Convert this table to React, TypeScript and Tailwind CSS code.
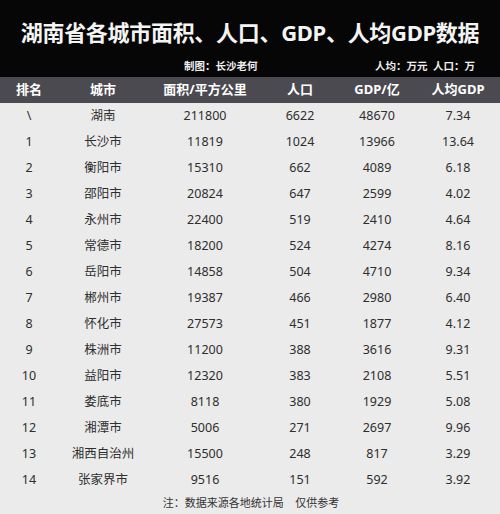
import React from "react";

const rows: [string, string, string, string, string, string][] = [
  ["\\", "湖南", "211800", "6622", "48670", "7.34"],
  ["1", "长沙市", "11819", "1024", "13966", "13.64"],
  ["2", "衡阳市", "15310", "662", "4089", "6.18"],
  ["3", "邵阳市", "20824", "647", "2599", "4.02"],
  ["4", "永州市", "22400", "519", "2410", "4.64"],
  ["5", "常德市", "18200", "524", "4274", "8.16"],
  ["6", "岳阳市", "14858", "504", "4710", "9.34"],
  ["7", "郴州市", "19387", "466", "2980", "6.40"],
  ["8", "怀化市", "27573", "451", "1877", "4.12"],
  ["9", "株洲市", "11200", "388", "3616", "9.31"],
  ["10", "益阳市", "12320", "383", "2108", "5.51"],
  ["11", "娄底市", "8118", "380", "1929", "5.08"],
  ["12", "湘潭市", "5006", "271", "2697", "9.96"],
  ["13", "湘西自治州", "15500", "248", "817", "3.29"],
  ["14", "张家界市", "9516", "151", "592", "3.92"],
];

const headers = ["排名", "城市", "面积/平方公里", "人口", "GDP/亿", "人均GDP"];
const grid = "grid grid-cols-[58px_90px_114px_76px_78px_84px]";
const font = { fontFamily: '"Noto Sans", "Noto Sans CJK SC", sans-serif' };

export default function App() {
  return (
    <div className="w-[500px] h-[514px] bg-[#ebebeb] overflow-hidden" style={font}>
      <div className="h-[77px] bg-[#060606] flex flex-col">
        <div className="h-[56px] flex items-center justify-center pt-[8px]">
          <span className="text-[#f4f4f4] text-[22px] font-bold tracking-[-0.3px]">
            湖南省各城市面积、人口、GDP、人均GDP数据
          </span>
        </div>
        <div className="flex-1 relative text-[10.5px] font-bold text-[#eeeeee]">
          <span className="absolute left-[184px] top-[3px]">制图：长沙老何</span>
          <span className="absolute left-[375px] top-[3px]">人均：万元&nbsp;&nbsp;人口：万</span>
        </div>
      </div>
      <div className={`${grid} h-[26px] bg-[#4b4a51] items-center text-white text-[13px] font-bold`}>
        {headers.map((h) => (
          <div key={h} className="text-center">{h}</div>
        ))}
      </div>
      {rows.map((r) => (
        <div key={r[1]} className={`${grid} h-[26px] items-center text-[#2e2e2e] text-[12.5px]`}>
          {r.map((c, i) => (
            <div key={i} className="text-center">{c}</div>
          ))}
        </div>
      ))}
      <div className="h-[21px] flex items-center justify-center text-[11px] text-[#333] pl-[2px]">
        注：数据来源各地统计局&nbsp;&nbsp;&nbsp;&nbsp;仅供参考
      </div>
    </div>
  );
}
